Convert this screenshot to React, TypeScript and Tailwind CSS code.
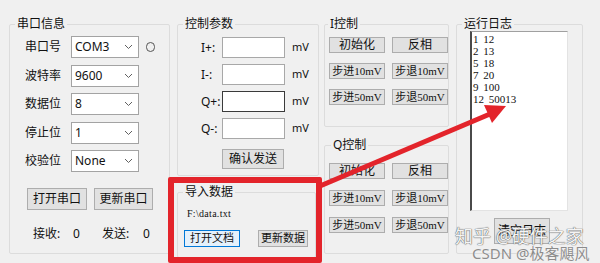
import type { ReactNode } from "react";

const ui = "font-['Noto_Sans','Noto_Sans_CJK_SC',sans-serif]";
const song = "font-['Liberation_Serif','Noto_Sans_CJK_SC',serif]";

function Group({
  title,
  className,
  legendClass = "ml-[5px]",
  children,
}: {
  title: string;
  className: string;
  legendClass?: string;
  children: ReactNode;
}) {
  return (
    <fieldset className={`border border-[#dcdcdc] rounded-[2px] ${className}`}>
      <legend className={`px-[2px] text-[12px] leading-[16px] text-[#111] ${legendClass}`}>
        {title}
      </legend>
      {children}
    </fieldset>
  );
}

function Chevron() {
  return (
    <svg width="9" height="6" viewBox="0 0 9 6">
      <path d="M1 1 L4.5 4.5 L8 1" fill="none" stroke="#606060" strokeWidth="1" />
    </svg>
  );
}

function Combo({ value }: { value: string }) {
  return (
    <div className="w-[68px] h-[22px] bg-white border border-[#a3a3a3] flex items-center justify-between pl-[3px] pr-[5px] text-[12px] text-[#111]">
      <span>{value}</span>
      <Chevron />
    </div>
  );
}

function Btn({
  label,
  className,
  serif,
}: {
  label: string;
  className: string;
  serif?: boolean;
}) {
  return (
    <div
      className={`bg-[#e1e1e1] border border-[#adadad] flex items-center justify-center text-[#111] ${
        serif ? `${song} text-[11px]` : "text-[12px]"
      } ${className}`}
    >
      {label}
    </div>
  );
}

function CtrlButtons() {
  const rows = [
    ["初始化", "反相"],
    ["步进10mV", "步退10mV"],
    ["步进50mV", "步退50mV"],
  ];
  return (
    <>
      {rows.map((r, i) => (
        <div key={i} className="flex gap-[7px]">
          <Btn label={r[0]} serif={i > 0} className="w-[56px] h-[16px] leading-[14px]" />
          <Btn label={r[1]} serif={i > 0} className="w-[56px] h-[16px] leading-[14px]" />
        </div>
      ))}
    </>
  );
}

export default function App() {
  const serial = [
    ["串口号", "COM3"],
    ["波特率", "9600"],
    ["数据位", "8"],
    ["停止位", "1"],
    ["校验位", "None"],
  ];
  const params = ["I+:", "I-:", "Q+:", "Q-:"];
  const logs = ["1 12", "2 13", "5 18", "7 20", "9 100", "12 50013"];

  return (
    <div className={`relative w-[600px] h-[263px] bg-[#f0f0f0] overflow-hidden flex pl-[9px] pt-[16px] ${ui}`}>
      {/* 串口信息 */}
      <Group title="串口信息" className="w-[161px] h-[238px] shrink-0">
        <div className="pl-[15px] pt-[4px]">
          <div className="flex flex-col gap-[6.5px]">
            {serial.map(([label, v], i) => (
              <div key={label} className="flex items-center h-[22px]">
                <span className="w-[46px] text-[12px] text-[#111]">{label}</span>
                <Combo value={v} />
                {i === 0 && (
                  <span className="ml-[7px] w-[9px] h-[10px] rounded-full border border-[#555]" />
                )}
              </div>
            ))}
          </div>
          <div className="flex gap-[7px] mt-[16px] ml-[2px]">
            <Btn label="打开串口" className="w-[60px] h-[22px]" />
            <Btn label="更新串口" className="w-[59px] h-[22px]" />
          </div>
          <div className="flex mt-[16px] text-[12px] leading-[16px] text-[#111]">
            <span className="ml-[8px] w-[40px]">接收:</span>
            <span className="w-[29px]">0</span>
            <span className="w-[41px]">发送:</span>
            <span>0</span>
          </div>
        </div>
      </Group>

      {/* 控制参数 + 导入数据 */}
      <div className="ml-[7px] w-[142px] shrink-0 flex flex-col">
        <Group title="控制参数" className="h-[160px]">
          <div className="pl-[23px] pt-[5px] flex flex-col gap-[6px]">
            {params.map((p) => (
              <div key={p} className="flex items-center h-[21px]">
                <span className="w-[21px] text-[12px] text-[#111]">{p}</span>
                <div
                  className={`w-[63px] h-[21px] bg-white border ${
                    p === "Q+:" ? "border-[#3a3a3a]" : "border-[#a8a8a8]"
                  }`}
                />
                <span className="ml-[7px] text-[11px] text-[#111]">mV</span>
              </div>
            ))}
            <Btn label="确认发送" className="mt-[4px] ml-[21px] w-[62px] h-[20px]" />
          </div>
        </Group>
        <Group title="导入数据" className="mt-[8px] h-[74px] w-[139px]">
          <div className="pl-[9px] pt-[7px]">
            <div className={`text-[10px] leading-[14px] tracking-[0.3px] text-[#111] ${song}`}>F:\data.txt</div>
            <div className="flex gap-[18px] mt-[9px] -ml-[3px]">
              <div className="w-[56px] h-[17px] bg-[#e5f1fb] border border-[#0078d7] flex items-center justify-center text-[11px] text-[#111]">
                打开文档
              </div>
              <Btn label="更新数据" className="w-[50px] h-[17px] !text-[11px]" />
            </div>
          </div>
        </Group>
      </div>

      {/* I控制 / Q控制 */}
      <div className="ml-[5px] w-[125px] shrink-0 flex flex-col">
        <Group title="I控制" legendClass="ml-[3px]" className="h-[111px]">
          <div className="pl-[4px] pt-[5px] flex flex-col gap-[10px]">
            <CtrlButtons />
          </div>
        </Group>
        <Group title="Q控制" legendClass="ml-[6px]" className="mt-[10px] h-[117px]">
          <div className="pl-[4px] pt-[10px] flex flex-col gap-[11px]">
            <CtrlButtons />
          </div>
        </Group>
      </div>

      {/* 运行日志 */}
      <Group title="运行日志" className="ml-[7px] w-[127px] h-[238px] shrink-0">
        <div className="pl-[13px] -mt-[1px]">
          <div
            className={`w-[98px] h-[180px] bg-white border border-[#e3e3e3] border-l-2 border-l-[#4a4a4a] border-t-[#a0a0a0] pl-[1px] pt-[1px] text-[11px] leading-[12px] text-[#111] [word-spacing:2px] ${song}`}
          >
            {logs.map((l) => (
              <div key={l}>{l}</div>
            ))}
          </div>
          <Btn label="清空日志" className="mt-[7px] ml-[24px] w-[56px] h-[26px]" />
        </div>
      </Group>

      {/* annotation: red frame and arrow */}
      <div className="absolute left-[168px] top-[177px] w-[154px] h-[86px] border-[6px] border-[#e3242b] rounded-[2px] pointer-events-none" />
      <svg
        className="absolute left-0 top-0 pointer-events-none"
        width="600"
        height="263"
        viewBox="0 0 600 263"
      >
        <line x1="320" y1="186" x2="490" y2="114" stroke="#e3242b" strokeWidth="5" />
        <polygon points="506,106 484,105 492,123" fill="#e3242b" />
      </svg>

      {/* watermarks */}
      <div className="absolute left-[455px] top-[225px] text-[18px] leading-[22px] text-[#f4f4f4] [text-shadow:0_0_1px_#555,0_0_1px_#555] pointer-events-none">
        知乎 @硬件之家
      </div>
      <div className="absolute left-[472px] top-[244px] text-[15px] leading-[18px] text-[#8c8c8c] [text-shadow:0_0_1px_#fff] pointer-events-none">
        CSDN @极客飓风
      </div>
    </div>
  );
}
